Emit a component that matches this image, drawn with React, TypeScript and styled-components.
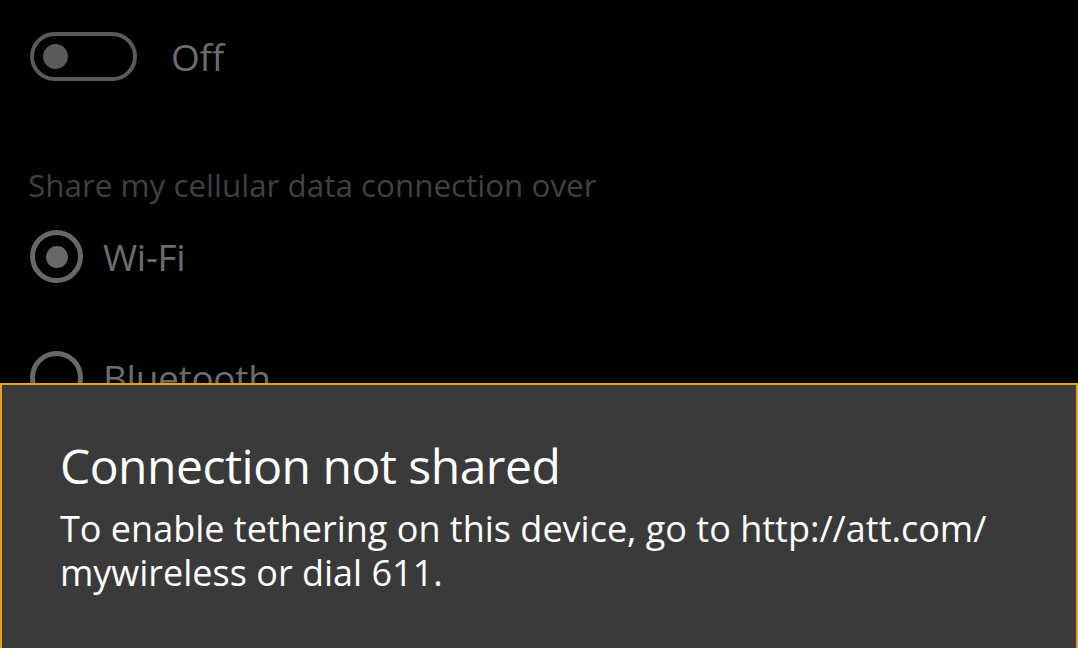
import styled, { createGlobalStyle } from "styled-components";

const GlobalStyle = createGlobalStyle`
    html, body {
        margin: 0;
        padding: 0;
        background: #000;
        overflow: hidden;
    }
    body {
        font-family: "Open Sans", "Noto Sans", sans-serif;
    }
`;

const Screen = styled.div`
    position: relative;
    width: 1078px;
    height: 648px;
    background: #000;
    overflow: hidden;
`;

const Settings = styled.div`
    display: flex;
    flex-direction: column;
    padding: 32px 0 0 30px;
`;

const ToggleRow = styled.div`
    display: flex;
    align-items: center;
    gap: 34px;
`;

const Toggle = styled.div`
    box-sizing: border-box;
    width: 107px;
    height: 49px;
    border: 4px solid #5a5a5a;
    border-radius: 25px;
    display: flex;
    align-items: center;
    padding-left: 9px;
`;

const Knob = styled.div`
    width: 25px;
    height: 25px;
    border-radius: 50%;
    background: #5a5a5a;
`;

const Label = styled.span`
    font-size: 37px;
    color: #6c6c6c;
    line-height: 1;
    letter-spacing: -0.3px;
`;

const Caption = styled.div`
    margin-top: 88px;
    margin-left: -2px;
    font-size: 31.4px;
    color: #404040;
    line-height: 1;
`;

const RadioList = styled.div`
    display: flex;
    flex-direction: column;
    gap: 68px;
    margin-top: 30px;
`;

const RadioRow = styled.div`
    display: flex;
    align-items: center;
    gap: 20px;
`;

const Radio = styled.div<{ $checked?: boolean }>`
    box-sizing: border-box;
    width: 53px;
    height: 53px;
    border-radius: 50%;
    border: 5px solid #686868;
    display: flex;
    align-items: center;
    justify-content: center;
    &::after {
        content: "";
        display: ${(p) => (p.$checked ? "block" : "none")};
        width: 22px;
        height: 22px;
        border-radius: 50%;
        background: #686868;
    }
`;

const Dialog = styled.div`
    position: absolute;
    left: 0;
    top: 383px;
    width: 1078px;
    height: 320px;
    box-sizing: border-box;
    background: #3a3a3a;
    border: 2px solid #e9a01c;
    padding: 50px 58px;
    color: #fff;
`;

const Title = styled.h1`
    margin: 0;
    font-weight: 400;
    font-size: 48px;
    letter-spacing: -0.5px;
    line-height: 1.3;
`;

const Message = styled.p`
    margin: 10px 0 0;
    font-size: 36px;
    line-height: 44px;
    width: 960px;
`;

function App() {
    return (
        <Screen>
            <GlobalStyle />
            <Settings>
                <ToggleRow>
                    <Toggle>
                        <Knob />
                    </Toggle>
                    <Label>Off</Label>
                </ToggleRow>
                <Caption>Share my cellular data connection over</Caption>
                <RadioList>
                    <RadioRow>
                        <Radio $checked />
                        <Label>Wi-Fi</Label>
                    </RadioRow>
                    <RadioRow>
                        <Radio />
                        <Label>Bluetooth</Label>
                    </RadioRow>
                </RadioList>
            </Settings>
            <Dialog>
                <Title>Connection not shared</Title>
                <Message>
                    To enable tethering on this device, go to http://att.com/
                    mywireless or dial 611.
                </Message>
            </Dialog>
        </Screen>
    );
}

export default App;
